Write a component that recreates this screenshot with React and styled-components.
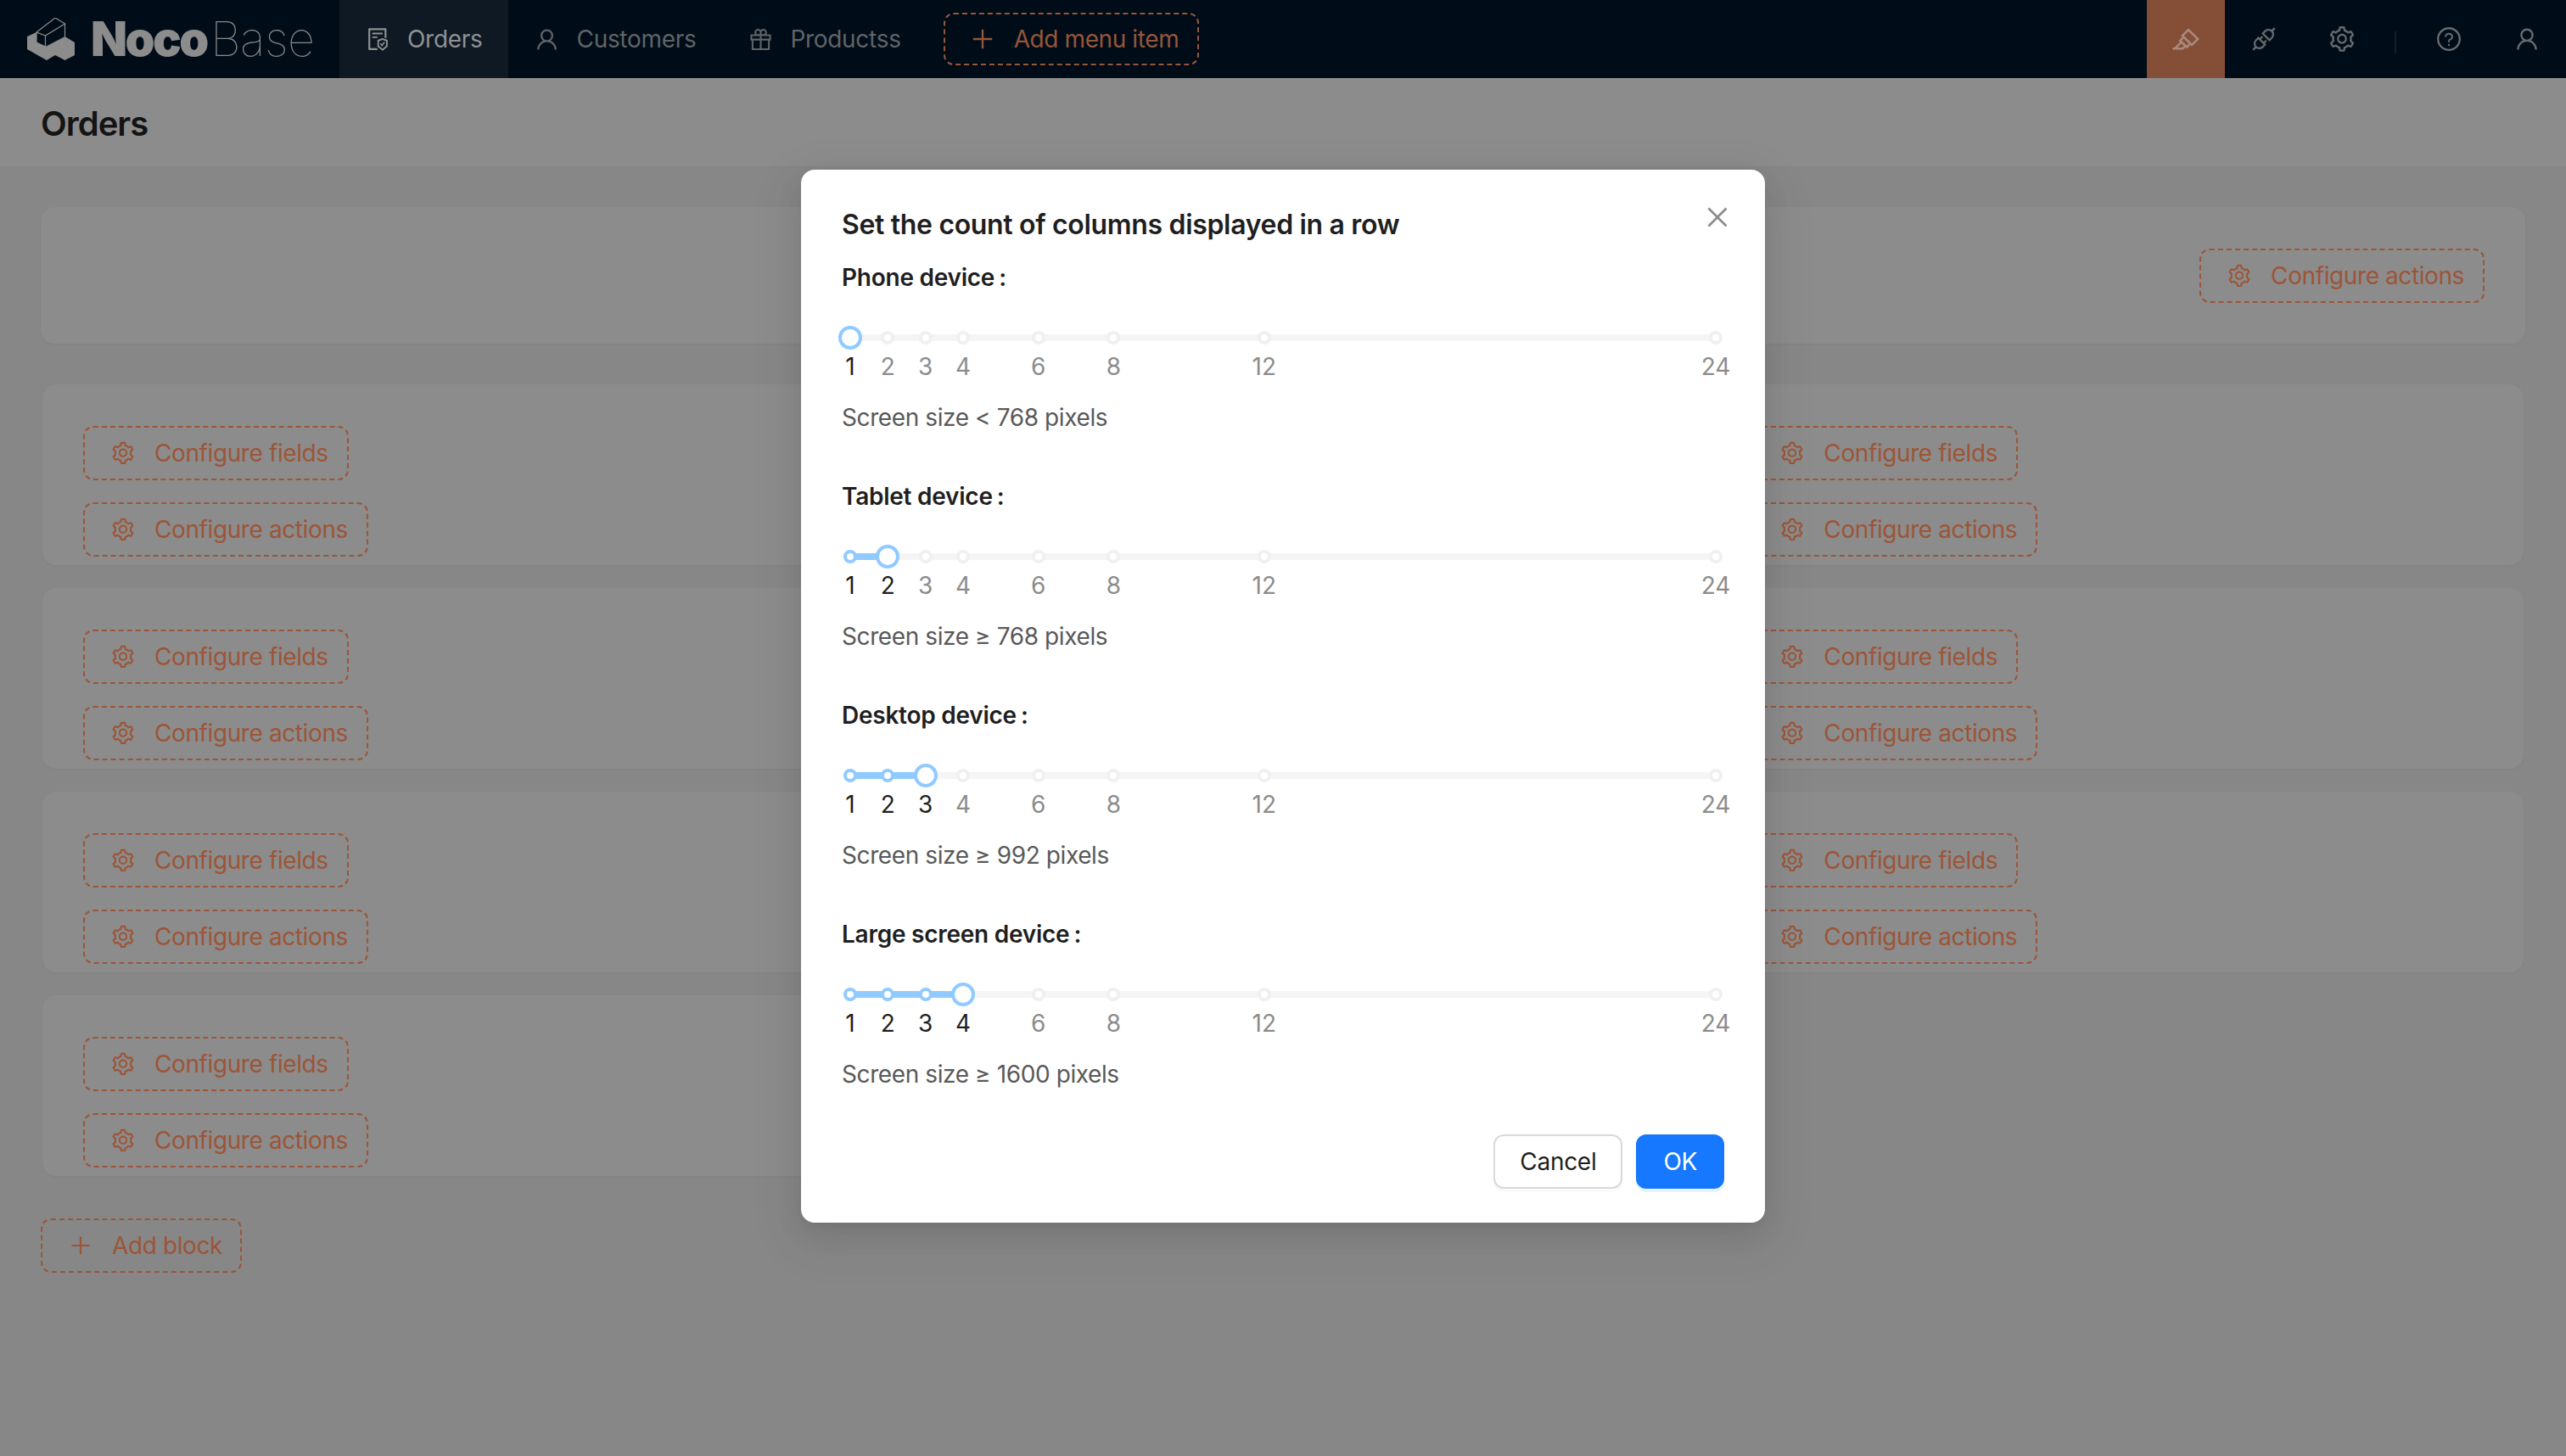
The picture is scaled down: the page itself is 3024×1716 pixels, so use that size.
import React from 'react';
import styled, { createGlobalStyle } from 'styled-components';
import {
  AiOutlineFileProtect, AiOutlineUser, AiOutlineGift, AiOutlinePlus, AiOutlineHighlight,
  AiOutlineApi, AiOutlineSetting, AiOutlineQuestionCircle, AiOutlineClose,
} from 'react-icons/ai';

const ORANGE = '#9c5537';
const FONT = 'Inter, "Liberation Sans", sans-serif';

const Global = createGlobalStyle`
  html, body { margin: 0; padding: 0; background: #878787; }
  * { box-sizing: border-box; }
  body { font-family: ${FONT}; font-size: 28px; }
`;

const Page = styled.div`
  position: relative;
  width: 3024px;
  height: 1716px;
  overflow: hidden;
  background: #878787;
`;

const TopBar = styled.header`
  height: 92px;
  background: #000c17;
  display: flex;
  align-items: stretch;
`;

const Logo = styled.div`
  width: 400px;
  padding-left: 32px;
  display: flex;
  align-items: center;
  gap: 19px;
  color: #8c8c8c;
`;

const Wordmark = styled.div`
  display: flex;
  gap: 4px;
  font-size: 56px;
  line-height: 92px;
`;

const Noco = styled.span`
  font-weight: 900;
  letter-spacing: -2.5px;
`;

const Base = styled.span`
  font-weight: 100;
  letter-spacing: -0.6px;
  color: #8a8a8a;
`;

const MenuItem = styled.div`
  display: flex;
  align-items: center;
  gap: 19px;
  padding: 0 31px 0 30px;
  font-size: 28px;
  letter-spacing: -0.3px;
  color: ${(p) => (p.$active ? '#8f9193' : '#5f6468')};
  background: ${(p) => (p.$active ? '#0f1923' : 'transparent')};
`;

const AddMenu = styled.div`
  align-self: center;
  height: 62px;
  margin-left: 19px;
  padding: 0 22px 0 28px;
  display: flex;
  align-items: center;
  gap: 21px;
  border: 2px dashed #95563b;
  border-radius: 12px;
  color: #95563b;
  font-size: 28px;
  letter-spacing: -0.4px;
`;

const RightTools = styled.div`
  margin-left: auto;
  display: flex;
  align-items: stretch;
`;

const ToolButton = styled.div`
  width: 92px;
  display: flex;
  align-items: center;
  justify-content: center;
  font-size: ${(p) => p.$size || 32}px;
  color: ${(p) => (p.$active ? '#a98a7e' : '#676b6f')};
  background: ${(p) => (p.$active ? '#854e37' : 'transparent')};
`;

const ToolDivider = styled.div`
  align-self: center;
  width: 2px;
  height: 26px;
  margin: 8px 16px 0 16px;
  background: #161f27;
`;

const PageHeader = styled.div`
  height: 104px;
  padding: 26px 48px 0;
  background: #8c8c8c;
  box-shadow: 0 1px 0 #858585;
`;

const Title = styled.h1`
  margin: 0;
  font-size: 40px;
  line-height: 56px;
  font-weight: 600;
  letter-spacing: -1px;
  color: #141414;
`;

const Content = styled.main`
  padding: 48px;
  display: flex;
  flex-direction: column;
`;

const FilterCard = styled.div`
  height: 161px;
  padding: 49px 48px 0;
  margin-bottom: 48px;
  display: flex;
  justify-content: flex-end;
  align-items: flex-start;
  background: #8c8c8c;
  border-radius: 16px;
  box-shadow: 0 1px 3px rgba(0, 0, 0, 0.04);
`;

const Grid = styled.div`
  margin: 0 2px;
  display: grid;
  grid-template-columns: repeat(3, 1fr);
  gap: 27px;
`;

const Card = styled.div`
  height: 213px;
  padding: 49px 48px 0;
  display: flex;
  flex-direction: column;
  align-items: flex-start;
  gap: 26px;
  background: #8c8c8c;
  border-radius: 16px;
  box-shadow: 0 1px 3px rgba(0, 0, 0, 0.04);
`;

const DashedButton = styled.div`
  height: 64px;
  padding: 0 22px 0 30px;
  display: inline-flex;
  align-items: center;
  gap: 22px;
  border: 2px dashed ${ORANGE};
  border-radius: 12px;
  color: ${ORANGE};
  font-size: 28px;
  letter-spacing: -0.4px;
  white-space: nowrap;
`;

const AddBlock = styled(DashedButton)`
  align-self: flex-start;
  margin-top: 50px;
  padding-right: 21px;
`;

const Mask = styled.div`
  position: absolute;
  inset: 0;
  display: flex;
  justify-content: center;
  align-items: flex-start;
  padding-top: 200px;
`;

const Modal = styled.section`
  position: relative;
  width: 1136px;
  padding: 43px 48px 40px;
  background: #fff;
  border-radius: 16px;
  box-shadow: 0 12px 32px rgba(0, 0, 0, 0.08), 0 6px 12px -8px rgba(0, 0, 0, 0.12),
    0 18px 56px 16px rgba(0, 0, 0, 0.05);
`;

const CloseButton = styled.div`
  position: absolute;
  top: 39px;
  right: 39px;
  display: flex;
  font-size: 34px;
  color: #8c8c8c;
`;

const ModalTitle = styled.h2`
  margin: 0 0 18px;
  font-size: 32px;
  line-height: 44px;
  font-weight: 600;
  letter-spacing: -0.33px;
  color: #1f1f1f;
`;

const Item = styled.div`
  height: 258px;
  &:last-of-type { height: 257px; }
`;

const Label = styled.div`
  font-size: 28px;
  line-height: 44px;
  font-weight: 600;
  letter-spacing: -0.25px;
  color: #1f1f1f;
`;

const Colon = styled.span`
  margin-left: 5px;
`;

const Slider = styled.div`
  position: relative;
  height: 93px;
  margin: 29px 10px 0;
`;

const Rail = styled.div`
  position: absolute;
  left: 0;
  right: 0;
  top: 16px;
  height: 8px;
  background: #f5f5f5;
`;

const ActiveTrack = styled.div`
  position: absolute;
  left: 0;
  top: 16px;
  height: 8px;
  background: #91caff;
`;

const Dot = styled.div`
  position: absolute;
  top: 12px;
  width: 16px;
  height: 16px;
  margin-left: -8px;
  background: #fff;
  border: 4px solid ${(p) => (p.$on ? '#91caff' : '#f0f0f0')};
  border-radius: 50%;
`;

const Handle = styled.div`
  position: absolute;
  top: 6px;
  width: 28px;
  height: 28px;
  margin-left: -14px;
  background: #fff;
  border: 4px solid #91caff;
  border-radius: 50%;
`;

const Mark = styled.div`
  position: absolute;
  top: 34px;
  transform: translateX(-50%);
  font-size: 28px;
  line-height: 40px;
  color: ${(p) => (p.$on ? '#1f1f1f' : '#8c8c8c')};
`;

const Help = styled.div`
  margin-top: -1px;
  font-size: 28px;
  line-height: 44px;
  letter-spacing: -0.4px;
  color: #595959;
`;

const Footer = styled.div`
  display: flex;
  justify-content: flex-end;
  gap: 16px;
`;

const FooterButton = styled.button`
  height: 64px;
  padding: 0 ${(p) => (p.$primary ? 30 : 29)}px;
  font-family: ${FONT};
  font-size: 28px;
  letter-spacing: -0.3px;
  border-radius: 12px;
  color: ${(p) => (p.$primary ? '#fff' : '#1f1f1f')};
  background: ${(p) => (p.$primary ? '#1677ff' : '#fff')};
  border: 2px solid ${(p) => (p.$primary ? '#1677ff' : '#d9d9d9')};
  box-shadow: 0 4px 0 ${(p) => (p.$primary ? 'rgba(5, 145, 255, 0.1)' : 'rgba(0, 0, 0, 0.02)')};
`;

const LogoMark = () => (
  <svg width="56" height="50" viewBox="0 0 56 50" fill="none">
    <path fill="#8c8c8c" d="M0 22 11 17V29L21.5 34 44.5 22 56 29V44L44.5 50 33 44 23 50 0 37Z" />
    <path stroke="#8c8c8c" strokeWidth="1.2" d="M11 17 33 0 44.5 7 21.5 21ZM21.5 21V34M44.5 7V22M11 17V29L21.5 34" />
  </svg>
);

const MARKS = [1, 2, 3, 4, 6, 8, 12, 24];
const pos = (m) => `${((m - 1) / 23) * 100}%`;

const DEVICES = [
  { label: 'Phone device', value: 1, help: 'Screen size < 768 pixels' },
  { label: 'Tablet device', value: 2, help: 'Screen size ≥ 768 pixels' },
  { label: 'Desktop device', value: 3, help: 'Screen size ≥ 992 pixels' },
  { label: 'Large screen device', value: 4, help: 'Screen size ≥ 1600 pixels' },
];

const DeviceSlider = ({ value }) => (
  <Slider>
    <Rail />
    <ActiveTrack style={{ width: pos(value) }} />
    {MARKS.map((m) =>
      m === value ? null : <Dot key={m} $on={m < value} style={{ left: pos(m) }} />
    )}
    <Handle style={{ left: pos(value) }} />
    {MARKS.map((m) => (
      <Mark key={m} $on={m <= value} style={{ left: pos(m) }}>{m}</Mark>
    ))}
  </Slider>
);

const ConfigureButton = ({ children }) => (
  <DashedButton><AiOutlineSetting size={30} />{children}</DashedButton>
);

const BlockCard = () => (
  <Card>
    <ConfigureButton>Configure fields</ConfigureButton>
    <ConfigureButton>Configure actions</ConfigureButton>
  </Card>
);

export default function App() {
  return (
    <Page>
      <Global />
      <TopBar>
        <Logo>
          <LogoMark />
          <Wordmark><Noco>Noco</Noco><Base>Base</Base></Wordmark>
        </Logo>
        <MenuItem $active><AiOutlineFileProtect size={31} />Orders</MenuItem>
        <MenuItem><AiOutlineUser size={31} />Customers</MenuItem>
        <MenuItem><AiOutlineGift size={31} />Productss</MenuItem>
        <AddMenu><AiOutlinePlus size={32} />Add menu item</AddMenu>
        <RightTools>
          <ToolButton $active $size={36}><AiOutlineHighlight /></ToolButton>
          <ToolButton $size={34}><AiOutlineApi /></ToolButton>
          <ToolButton $size={34}><AiOutlineSetting /></ToolButton>
          <ToolDivider />
          <ToolButton><AiOutlineQuestionCircle /></ToolButton>
          <ToolButton><AiOutlineUser /></ToolButton>
        </RightTools>
      </TopBar>
      <PageHeader><Title>Orders</Title></PageHeader>
      <Content>
        <FilterCard><ConfigureButton>Configure actions</ConfigureButton></FilterCard>
        <Grid>
          {Array.from({ length: 10 }, (_, i) => <BlockCard key={i} />)}
        </Grid>
        <AddBlock><AiOutlinePlus size={30} />Add block</AddBlock>
      </Content>
      <Mask>
        <Modal>
          <CloseButton><AiOutlineClose /></CloseButton>
          <ModalTitle>Set the count of columns displayed in a row</ModalTitle>
          {DEVICES.map((d) => (
            <Item key={d.label}>
              <Label>{d.label}<Colon>:</Colon></Label>
              <DeviceSlider value={d.value} />
              <Help>{d.help}</Help>
            </Item>
          ))}
          <Footer>
            <FooterButton>Cancel</FooterButton>
            <FooterButton $primary>OK</FooterButton>
          </Footer>
        </Modal>
      </Mask>
    </Page>
  );
}
